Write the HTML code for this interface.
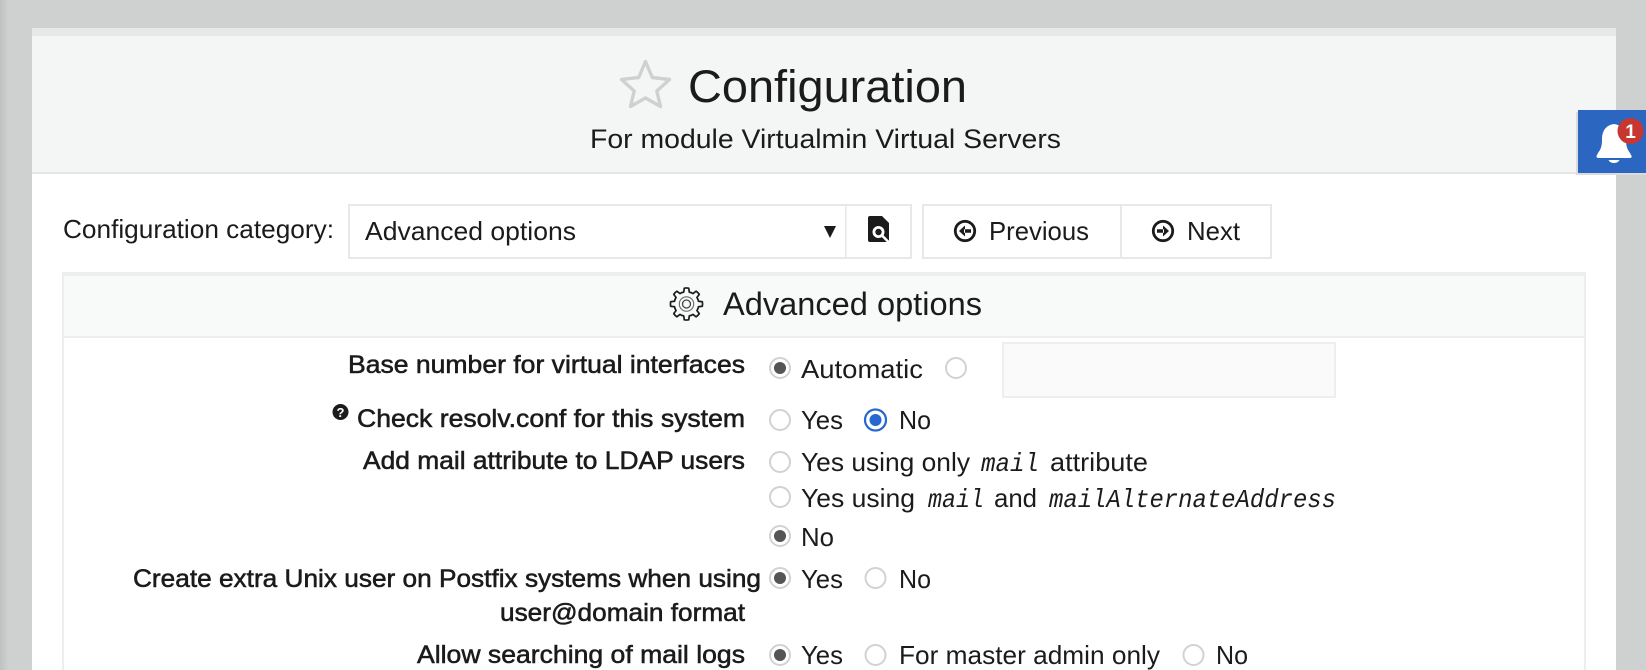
<!DOCTYPE html>
<html><head><meta charset="utf-8"><style>
html,body{margin:0;padding:0;width:1646px;height:670px;overflow:hidden;background:#cfd1d0}
svg{display:block}
text{font-family:"Liberation Sans",sans-serif;fill:#1b1b1b}
.l{font-size:25px;font-weight:400;stroke:#1b1b1b;stroke-width:.55px}
.v{font-size:26px}
.m{font-family:"Liberation Mono",monospace;font-style:italic;font-size:26px}
</style></head><body>
<svg width="1646" height="670" viewBox="0 0 1646 670" xmlns="http://www.w3.org/2000/svg">
<defs><linearGradient id="g" x1="0" x2="1" y1="0" y2="0"><stop offset="0" stop-color="#bfc1c0"/><stop offset="1" stop-color="#cfd1d0"/></linearGradient></defs>
<rect width="1646" height="670" fill="#cfd1d0"/>
<rect x="0" y="0" width="8" height="670" fill="url(#g)"/>
<rect x="32" y="28" width="1584" height="642" fill="#fff"/>
<rect x="32" y="28" width="1584" height="8" fill="#e8e8e8"/>
<rect x="32" y="36" width="1584" height="136" fill="#f4f6f5"/>
<rect x="32" y="172" width="1584" height="2" fill="#e6e6e6"/>

<path d="M645.5 61.5 L652.3 77.5 L669.5 79.5 L656.8 91 L660.5 106.5 L645.5 98 L630.5 106.5 L634.2 91 L621.5 79.5 L638.7 77.5 Z" fill="none" stroke="#d0d0d0" stroke-width="3.4" stroke-linejoin="round"/>
<text x="688" y="102" font-size="45" textLength="279" lengthAdjust="spacingAndGlyphs">Configuration</text>
<text x="590" y="148" font-size="27" textLength="471" lengthAdjust="spacingAndGlyphs">For module Virtualmin Virtual Servers</text>

<rect x="1576" y="112" width="70" height="63" fill="#dcdcdc"/>
<rect x="1578" y="110" width="68" height="63" fill="#2b67c0"/>
<path d="M1614 124 c-8 1 -12 7 -12 15 c0 7 -1 10 -4 14 l-1 2 c-1 1 -0.5 3 1 3 h32 c2 0 2 -2 1 -3 l-1 -2 c-3 -4 -4 -7 -4 -14 c0 -8 -4 -14 -12 -15 z" fill="#fff"/>
<path d="M1608.5 160 a6 5 0 0 0 11 0 z" fill="#fff"/>
<circle cx="1630.5" cy="131" r="13" fill="#c8372f"/>
<text x="1630.5" y="138" font-size="19" font-weight="700" text-anchor="middle" style="fill:#fff">1</text>

<text x="63" y="238" font-size="26" textLength="271" lengthAdjust="spacingAndGlyphs">Configuration category:</text>
<rect x="349" y="205" width="562" height="53" fill="#fff" stroke="#e8e8e8" stroke-width="2"/>
<rect x="845" y="205" width="1.6" height="53" fill="#e8e8e8"/>
<text x="365" y="240" font-size="26" textLength="211" lengthAdjust="spacingAndGlyphs">Advanced options</text>
<path d="M824 226 H836 L830 238 Z" fill="#1b1b1b"/>
<path d="M870 216 H882 L889 223 V240 a2 2 0 0 1 -2 2 H870 a2 2 0 0 1 -2 -2 V218 a2 2 0 0 1 2 -2 Z" fill="#1b1b1b"/>
<circle cx="878.5" cy="232" r="6" fill="#fff"/>
<circle cx="878.5" cy="232" r="3.2" fill="#1b1b1b"/>
<path d="M882.5 236 L889 242.5" stroke="#fff" stroke-width="2.6"/>

<rect x="923" y="205" width="348" height="53" fill="#fff" stroke="#e8e8e8" stroke-width="2"/>
<rect x="1120" y="205" width="2" height="53" fill="#e8e8e8"/>
<circle cx="965" cy="231" r="9.7" fill="none" stroke="#1b1b1b" stroke-width="2.8"/>
<path d="M965 225.5 L959 231 L965 236.5 Z M964 229.2 H971 V232.8 H964 Z" fill="#1b1b1b"/>
<text x="989" y="240" font-size="26" textLength="100" lengthAdjust="spacingAndGlyphs">Previous</text>
<circle cx="1163" cy="231" r="9.7" fill="none" stroke="#1b1b1b" stroke-width="2.8"/>
<path d="M1163 225.5 L1169 231 L1163 236.5 Z M1164 229.2 H1157 V232.8 H1164 Z" fill="#1b1b1b"/>
<text x="1187" y="240" font-size="26" textLength="53" lengthAdjust="spacingAndGlyphs">Next</text>

<rect x="62" y="272" width="1524" height="398" fill="#eee"/>
<rect x="64" y="276" width="1520" height="394" fill="#fff"/>
<rect x="64" y="276" width="1520" height="60" fill="#f8faf9"/>
<rect x="64" y="336" width="1520" height="2" fill="#eee"/>
<g transform="translate(686.5 304)" fill="none" stroke="#1b1b1b" stroke-width="1.7" stroke-linejoin="round" stroke-linecap="round">
<path d="M-4.71 -11.36 L-2.77 -11.98 L-2.23 -15.84 Q0 -16.3 2.23 -15.84 L2.77 -11.98 L4.71 -11.36"/>
<path transform="rotate(45)" d="M-4.71 -11.36 L-2.77 -11.98 L-2.23 -15.84 Q0 -16.3 2.23 -15.84 L2.77 -11.98 L4.71 -11.36"/>
<path transform="rotate(90)" d="M-4.71 -11.36 L-2.77 -11.98 L-2.23 -15.84 Q0 -16.3 2.23 -15.84 L2.77 -11.98 L4.71 -11.36"/>
<path transform="rotate(135)" d="M-4.71 -11.36 L-2.77 -11.98 L-2.23 -15.84 Q0 -16.3 2.23 -15.84 L2.77 -11.98 L4.71 -11.36"/>
<path transform="rotate(180)" d="M-4.71 -11.36 L-2.77 -11.98 L-2.23 -15.84 Q0 -16.3 2.23 -15.84 L2.77 -11.98 L4.71 -11.36"/>
<path transform="rotate(225)" d="M-4.71 -11.36 L-2.77 -11.98 L-2.23 -15.84 Q0 -16.3 2.23 -15.84 L2.77 -11.98 L4.71 -11.36"/>
<path transform="rotate(270)" d="M-4.71 -11.36 L-2.77 -11.98 L-2.23 -15.84 Q0 -16.3 2.23 -15.84 L2.77 -11.98 L4.71 -11.36"/>
<path transform="rotate(315)" d="M-4.71 -11.36 L-2.77 -11.98 L-2.23 -15.84 Q0 -16.3 2.23 -15.84 L2.77 -11.98 L4.71 -11.36"/>
<circle r="7.2" stroke="#666" stroke-width="1.1"/>
<circle r="4" stroke="#444" stroke-width="1.3"/>
</g>
<text x="723" y="315" font-size="32" textLength="259" lengthAdjust="spacingAndGlyphs">Advanced options</text>

<text class="l" x="348" y="373" textLength="397" lengthAdjust="spacingAndGlyphs">Base number for virtual interfaces</text>
<circle cx="340.5" cy="412" r="8" fill="#1b1b1b"/>
<text x="340.5" y="417" font-size="13" font-weight="700" text-anchor="middle" style="fill:#fff">?</text>
<text class="l" x="357" y="427" textLength="388" lengthAdjust="spacingAndGlyphs">Check resolv.conf for this system</text>
<text class="l" x="363" y="469" textLength="382" lengthAdjust="spacingAndGlyphs">Add mail attribute to LDAP users</text>
<text class="l" x="133" y="587" textLength="628" lengthAdjust="spacingAndGlyphs">Create extra Unix user on Postfix systems when using</text>
<text class="l" x="500" y="621" textLength="245" lengthAdjust="spacingAndGlyphs">user@domain format</text>
<text class="l" x="417" y="663" textLength="328" lengthAdjust="spacingAndGlyphs">Allow searching of mail logs</text>

<g fill="#fff" stroke="#d2d2d2" stroke-width="2">
<circle cx="780" cy="368" r="10"/>
<circle cx="956" cy="368" r="10"/>
<circle cx="780" cy="420" r="10"/>
<circle cx="780" cy="462" r="10"/>
<circle cx="780" cy="497" r="10"/>
<circle cx="780" cy="536" r="10"/>
<circle cx="780" cy="578" r="10"/>
<circle cx="875.5" cy="578" r="10"/>
<circle cx="780" cy="655" r="10"/>
<circle cx="875.5" cy="655" r="10"/>
<circle cx="1193.5" cy="655" r="10"/>
</g>
<g fill="#555">
<circle cx="780" cy="368" r="6"/>
<circle cx="780" cy="536" r="6"/>
<circle cx="780" cy="578" r="6"/>
<circle cx="780" cy="655" r="6"/>
</g>
<circle cx="875.5" cy="420" r="10.5" fill="#fff" stroke="#2468d0" stroke-width="2.2"/>
<circle cx="875.5" cy="420" r="6" fill="#2468d0"/>

<text class="v" x="801" y="378" textLength="122" lengthAdjust="spacingAndGlyphs">Automatic</text>
<rect x="1003" y="343" width="332" height="54" fill="#fafafa" stroke="#eee" stroke-width="2"/>
<text class="v" x="801" y="429" textLength="42" lengthAdjust="spacingAndGlyphs">Yes</text>
<text class="v" x="899" y="429" textLength="32" lengthAdjust="spacingAndGlyphs">No</text>
<text class="v" x="801" y="471" textLength="169" lengthAdjust="spacingAndGlyphs">Yes using only</text>
<text class="m" x="981" y="471" textLength="58" lengthAdjust="spacingAndGlyphs">mail</text>
<text class="v" x="1050" y="471" textLength="98" lengthAdjust="spacingAndGlyphs">attribute</text>
<text class="v" x="801" y="507" textLength="114" lengthAdjust="spacingAndGlyphs">Yes using</text>
<text class="m" x="928" y="507" textLength="56" lengthAdjust="spacingAndGlyphs">mail</text>
<text class="v" x="994" y="507" textLength="43" lengthAdjust="spacingAndGlyphs">and</text>
<text class="m" x="1049" y="507" textLength="287" lengthAdjust="spacingAndGlyphs">mailAlternateAddress</text>
<text class="v" x="801" y="546" textLength="33" lengthAdjust="spacingAndGlyphs">No</text>
<text class="v" x="801" y="588" textLength="42" lengthAdjust="spacingAndGlyphs">Yes</text>
<text class="v" x="899" y="588" textLength="32" lengthAdjust="spacingAndGlyphs">No</text>
<text class="v" x="801" y="664" textLength="42" lengthAdjust="spacingAndGlyphs">Yes</text>
<text class="v" x="899" y="664" textLength="261" lengthAdjust="spacingAndGlyphs">For master admin only</text>
<text class="v" x="1216" y="664" textLength="32" lengthAdjust="spacingAndGlyphs">No</text>
</svg>
</body></html>
